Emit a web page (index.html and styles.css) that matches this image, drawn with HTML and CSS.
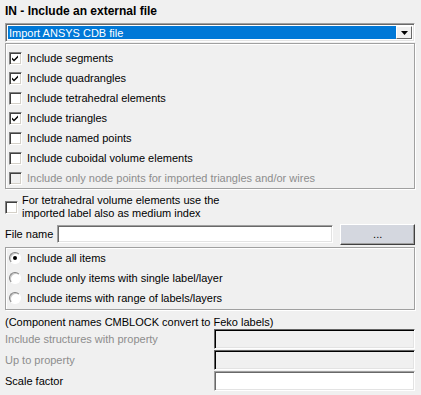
FILE: index.html
```html
<!DOCTYPE html>
<html lang="en">
<head>
    <meta charset="UTF-8">
    <title>IN - Include an external file</title>
    <link rel="stylesheet" href="styles.css">
</head>
<body>
    <div class="panel">
        <div class="title">IN - Include an external file</div>

        <div class="select">
            <span class="select-value">Import ANSYS CDB file</span>
            <span class="select-btn">
                <svg width="7" height="4" viewBox="0 0 7 4"><path d="M0 0h7L3.5 4z" fill="#000"/></svg>
            </span>
        </div>

        <div class="group">
            <div class="row"><span class="check on"><svg width="9" height="9" viewBox="0 0 9 9"><path d="M1 3.5l2 2 4-4v2l-4 4-2-2z" fill="#000"/></svg></span>Include segments</div>
            <div class="row"><span class="check on"><svg width="9" height="9" viewBox="0 0 9 9"><path d="M1 3.5l2 2 4-4v2l-4 4-2-2z" fill="#000"/></svg></span>Include quadrangles</div>
            <div class="row"><span class="check"></span>Include tetrahedral elements</div>
            <div class="row"><span class="check on"><svg width="9" height="9" viewBox="0 0 9 9"><path d="M1 3.5l2 2 4-4v2l-4 4-2-2z" fill="#000"/></svg></span>Include triangles</div>
            <div class="row"><span class="check"></span>Include named points</div>
            <div class="row"><span class="check"></span>Include cuboidal volume elements</div>
            <div class="row disabled"><span class="check off"></span>Include only node points for imported triangles and/or wires</div>
        </div>

        <div class="medium">
            <span class="check"></span>
            <span>For tetrahedral volume elements use the<br>imported label also as medium index</span>
        </div>

        <div class="file-row">
            <span class="file-label">File name</span>
            <span class="field"></span>
            <span class="btn">...</span>
        </div>

        <div class="group radios">
            <div class="row"><span class="radio on"></span>Include all items</div>
            <div class="row"><span class="radio"></span>Include only items with single label/layer</div>
            <div class="row"><span class="radio"></span>Include items with range of labels/layers</div>
        </div>

        <div class="note">(Component names CMBLOCK convert to Feko labels)</div>

        <div class="props">
            <span class="disabled">Include structures with property</span>
            <span class="field off"></span>
            <span class="disabled">Up to property</span>
            <span class="field off"></span>
            <span>Scale factor</span>
            <span class="field"></span>
        </div>
    </div>
</body>
</html>
```

FILE: styles.css
```css
body {
    margin: 0;
    padding: 0;
    background: #f0f0f0;
    font-family: 'Liberation Sans', Arial, sans-serif;
    font-size: 11px;
    color: #000;
}

.panel {
    display: flex;
    flex-direction: column;
    padding: 4px 6px 0 5px;
}

.title {
    font-weight: bold;
    font-size: 12px;
    line-height: 14px;
}

.select {
    display: flex;
    margin-top: 5px;
    height: 19px;
    box-sizing: border-box;
    border: 1px solid;
    border-color: #a0a0a0 #fff #fff #a0a0a0;
    box-shadow: inset 1px 1px 0 #696969, inset -1px -1px 0 #e3e3e3;
    background: #fff;
    padding: 2px;
}

.select-value {
    flex: 1;
    background: #0078d7;
    color: #fff;
    line-height: 15px;
    padding-left: 1px;
}

.select-btn {
    width: 16px;
    box-sizing: border-box;
    background: #f0f0f0;
    border: 1px solid;
    border-color: #fff #696969 #696969 #fff;
    display: flex;
    align-items: center;
    justify-content: center;
}

.group {
    margin-top: 1px;
    border: 1px solid #a0a0a0;
    box-shadow: inset 1px 1px 0 #fff, 1px 1px 0 #fff;
    padding: 4px 0 0 3px;
}

.row {
    display: flex;
    align-items: center;
    height: 20px;
}

.disabled {
    color: #8d8d8d;
}

.check {
    width: 13px;
    height: 13px;
    box-sizing: border-box;
    margin-right: 5px;
    background: #fff;
    border: 1px solid;
    border-color: #808080 #fff #fff #808080;
    box-shadow: inset 1px 1px 0 #404040, inset -1px -1px 0 #d4d0c8;
    display: flex;
    align-items: center;
    justify-content: center;
    flex-shrink: 0;
}

.check.off {
    background: #f0f0f0;
}

.medium {
    display: flex;
    align-items: center;
    margin-top: 5px;
    line-height: 13px;
}

.medium .check {
    margin-right: 4px;
}

.file-row {
    display: flex;
    align-items: center;
    margin-top: 3px;
    height: 22px;
}

.file-label {
    width: 52px;
}

.file-row .field {
    width: 278px;
    height: 18px;
}

.field {
    box-sizing: border-box;
    background: #fff;
    border: 1px solid;
    border-color: #a0a0a0 #fff #fff #a0a0a0;
    box-shadow: inset 1px 1px 0 #696969, inset -1px -1px 0 #e3e3e3;
}

.field.off {
    background: #f0f0f0;
    border-color: #646464 #fff #fff #646464;
    box-shadow: inset 1px 1px 0 #000, inset -1px -1px 0 #e3e3e3;
}

.btn {
    margin-left: 7px;
    width: 75px;
    height: 21px;
    box-sizing: border-box;
    background: #d4d7df;
    border: 1px solid;
    border-color: #fff #404040 #404040 #fff;
    box-shadow: inset -1px -1px 0 #a0a0a0;
    text-align: center;
    line-height: 19px;
}

.radios {
    margin-top: 2px;
    padding: 0 0 1px 3px;
}

.radio {
    width: 12px;
    height: 12px;
    box-sizing: border-box;
    margin-right: 6px;
    border-radius: 50%;
    background: #fff;
    border: 1px solid;
    border-color: #808080 #fff #fff #808080;
    box-shadow: inset 1px 1px 0 #c8c8c8;
    display: flex;
    align-items: center;
    justify-content: center;
}

.radio.on::after {
    content: "";
    width: 4px;
    height: 4px;
    border-radius: 50%;
    background: #000;
}

.note {
    margin-top: 5px;
    line-height: 14px;
}

.props {
    display: grid;
    grid-template-columns: 209px 201px;
    grid-auto-rows: 20px;
    row-gap: 1px;
    align-items: center;
}

.props .field {
    height: 20px;
}
```
